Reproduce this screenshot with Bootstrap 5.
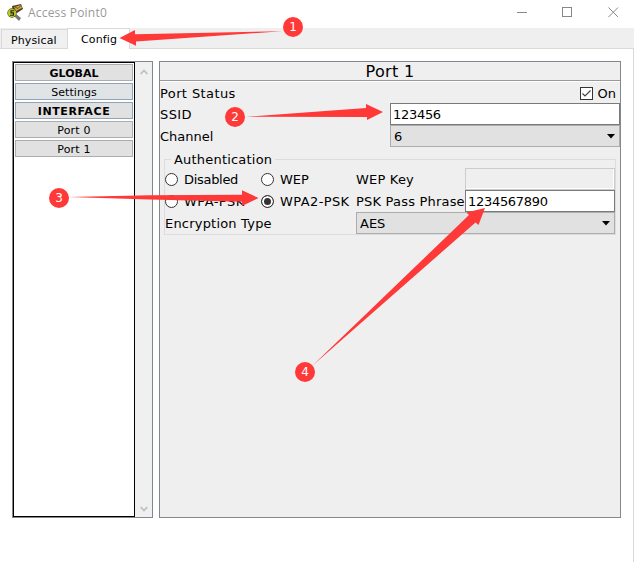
<!DOCTYPE html>
<html lang="en">
<head>
<meta charset="utf-8">
<title>Access Point0</title>
<link href="https://cdn.jsdelivr.net/npm/bootstrap@5.3.0/dist/css/bootstrap.min.css" rel="stylesheet">
<style>
body{font:13px/1 "DejaVu Sans",Verdana,sans-serif;color:#000;background:#fff;width:634px;height:562px;overflow:hidden}
.titlebar{height:28px;padding:0 15px 3px 7px;font:12px/1 "Open Sans","Noto Sans",sans-serif;color:#999}
.titlebar .caption{margin-left:4px;letter-spacing:.2px}
.controls{gap:35px}
.controls svg:last-child{margin-left:1px}
.tabstrip{height:21px;background:#efefef;border-bottom:1px solid #d9d9d9;padding-left:1px;font-size:11px}
.tab{height:19px;border:1px solid #d9d9d9;border-bottom:0;width:67px;padding:2px 0 0 9px;background:#f0f0f0;letter-spacing:.12px}
.tab.current{width:63px;height:21px;margin-bottom:-1px;margin-left:-1px;background:#fff;padding:1px 0 0 13px}
.workspace{height:513px;border-right:1px solid #d9d9d9;padding:12px 12px 44px}
.sidebar{width:141px;border:1px solid #828790;margin-right:6px;background:#f0f0f0}
.devices{width:122px;border:1px solid #000;padding:1px;gap:2px;background:#fff}
.side-btn{height:17px;border:1px solid #adadad;background:#e1e1e1;font-size:11px;letter-spacing:.05px;padding-top:1px}
.side-btn.hot{border-color:#8ea4b8;background:#e0e4e7}
.side-btn.head{background:#e1e1e1}
.scroller{width:17px;padding:7px 0 5px}
.config{width:462px;border:1px solid #828790;background:#efefef}
.config-title{height:19px;border-bottom:1px solid #999;font-size:16px;box-shadow:0 1px #fff;letter-spacing:.35px;padding-top:1px}
.line{height:22px}
.status-line{padding-top:3px;padding-right:4px}
.field{height:22px;border:1px solid #7a7a7a;background:#fff;padding-left:2px}
.combo{height:22px;border:1px solid #adadad;background:#e1e1e1;padding:0 4px 0 3px}
.w-main{width:230px}
.w-aes{width:259px}
.authbox{margin:12px 4px 0;height:76px;border:1px solid #dcdcdc;padding-top:8px}
.legend-text{position:absolute;left:6px;top:-8px;padding:0 3px;background:#efefef;height:15px;line-height:15px}
.c1{width:96px}.c2{width:95px}.c3{width:109px}
.radio{width:13px;height:13px;border:1px solid #333;border-radius:50%;background:#fff;margin-right:6px;flex:none}
.radio.on{box-shadow:inset 0 0 0 2px #fff;background:#333}
.off{border-color:#ccc;background:#efefef;box-shadow:inset -1px -1px #fff}
.line span{white-space:nowrap}
.ls-n{letter-spacing:-.3px}
.ls-a{letter-spacing:.2px}
.ls-b{letter-spacing:.4px}
.ls-c{letter-spacing:.6px}
.notes{left:0;top:0;pointer-events:none}
</style>
<script src="https://cdn.jsdelivr.net/npm/bootstrap@5.3.0/dist/js/bootstrap.bundle.min.js"></script>
</head>
<body class="position-relative">
<header class="titlebar d-flex align-items-center">
  <svg width="17" height="18" viewBox="0 0 17 18">
    <path d="M5 2l9-2 2 5-6 4-4-2z" fill="#4b3d20"/><path d="M7 3l7-2 1 3-6 3z" fill="#d0a548"/><path d="M8 3l3 1.500 3-3" fill="none" stroke="#54401c" stroke-width=".8"/>
    <path d="M9 10l5 4-2 3-5-5z" fill="#777"/><circle cx="5" cy="9" r="4.700" fill="#55561c"/><circle cx="5" cy="9" r="4" fill="#bdcc26"/><path d="M7.200 6.800H4v2.100h2.500v2.300H3" fill="none" stroke="#222214" stroke-width="1.100"/>
  </svg>
  <span class="caption">Access Point0</span>
  <div class="controls d-flex align-items-center ms-auto">
    <svg width="10" height="11"><path d="M0 5.500h10" stroke="#888"/></svg>
    <svg width="10" height="11"><rect x=".5" y=".5" width="9" height="9" fill="none" stroke="#888"/></svg>
    <svg width="11" height="11"><path d="M.5 .5l9.500 9.500M10 .5L.5 10" fill="none" stroke="#888"/></svg>
  </div>
</header>
<nav class="tabstrip d-flex align-items-end">
  <div class="tab d-flex align-items-center">Physical</div>
  <div class="tab current d-flex align-items-center">Config</div>
</nav>
<main class="workspace d-flex">
  <aside class="sidebar d-flex">
    <div class="devices d-flex flex-column">
      <div class="side-btn head fw-bold d-flex align-items-center justify-content-center">GLOBAL</div>
      <div class="side-btn hot d-flex align-items-center justify-content-center">Settings</div>
      <div class="side-btn hot head fw-bold ls-c d-flex align-items-center justify-content-center">INTERFACE</div>
      <div class="side-btn ls-a d-flex align-items-center justify-content-center">Port 0</div>
      <div class="side-btn ls-a d-flex align-items-center justify-content-center">Port 1</div>
    </div>
    <div class="scroller d-flex flex-column justify-content-between align-items-center">
      <svg width="8" height="6"><path d="M.7 5L4 1.500 7.300 5" fill="none" stroke="#bfbfbf" stroke-width="1.800"/></svg>
      <svg width="8" height="6"><path d="M.7 1L4 4.500 7.300 1" fill="none" stroke="#bfbfbf" stroke-width="1.800"/></svg>
    </div>
  </aside>
  <section class="config">
    <div class="config-title d-flex align-items-center justify-content-center">Port 1</div>
    <div class="line status-line d-flex align-items-center justify-content-between">
      <span class="ls-b">Port Status</span>
      <span class="d-flex align-items-center">
        <svg width="18" height="14"><rect x=".5" y=".5" width="12" height="12" fill="#fff" stroke="#333"/><path d="M2.500 6.500L5 9l5.500-5.500" fill="none" stroke="#444" stroke-width="1.200"/></svg><span>On</span>
      </span>
    </div>
    <div class="line d-flex align-items-center justify-content-between"><span class="ls-b">SSID</span><div class="field w-main d-flex align-items-center"><span class="ls-n">123456</span></div></div>
    <div class="line d-flex align-items-center justify-content-between"><span>Channel</span><div class="combo w-main d-flex align-items-center justify-content-between"><span>6</span><svg width="8" height="5"><path d="M0 0h8L4 4.500z"/></svg></div></div>
    <div class="authbox position-relative">
      <span class="legend-text ls-a">Authentication</span>
      <div class="line d-flex align-items-center">
        <div class="c1 d-flex align-items-center"><i class="radio"></i><span class="ls-n">Disabled</span></div>
        <div class="c2 d-flex align-items-center"><i class="radio"></i><span>WEP</span></div>
        <div class="c3"><span class="ls-a">WEP Key</span></div>
        <div class="field off flex-grow-1"></div>
      </div>
      <div class="line d-flex align-items-center">
        <div class="c1 d-flex align-items-center"><i class="radio"></i><span class="ls-b">WPA-PSK</span></div>
        <div class="c2 d-flex align-items-center"><i class="radio on"></i><span class="ls-b">WPA2-PSK</span></div>
        <div class="c3"><span class="ls-a">PSK Pass Phrase</span></div>
        <div class="field flex-grow-1 d-flex align-items-center"><span class="ls-n">1234567890</span></div>
      </div>
      <div class="line d-flex align-items-center justify-content-between">
        <span class="ls-a">Encryption Type</span>
        <div class="combo w-aes d-flex align-items-center justify-content-between"><span>AES</span><svg width="8" height="5"><path d="M0 0h8L4 4.500z"/></svg></div>
      </div>
    </div>
  </section>
</main>
<svg class="notes position-absolute" width="634" height="562" font-size="12" text-anchor="middle">
  <g fill="#ff3838">
    <path d="M119.500 38L135 30v4.300L282 31.200 136 41.500v4.300z"/>
    <path d="M246 116.800L366 108v-4l17 8-16 8v-3z"/>
    <path d="M68 197l82-1.700 92-.6v-4.400l16.500 7.700-16.500 8v-4.300l-92-2.200z"/>
    <path d="M312 366L469 215l-2.500-2.500 18.500-4.500-6.500 17-3-2.500z"/>
    <circle cx="293" cy="27" r="10"/><circle cx="235" cy="117" r="10"/><circle cx="59" cy="198" r="10"/><circle cx="305" cy="372" r="10"/>
  </g>
  <g fill="#fff"><text x="293" y="31">1</text><text x="235" y="121">2</text><text x="59" y="202">3</text><text x="305" y="376">4</text></g>
</svg>
</body>
</html>
